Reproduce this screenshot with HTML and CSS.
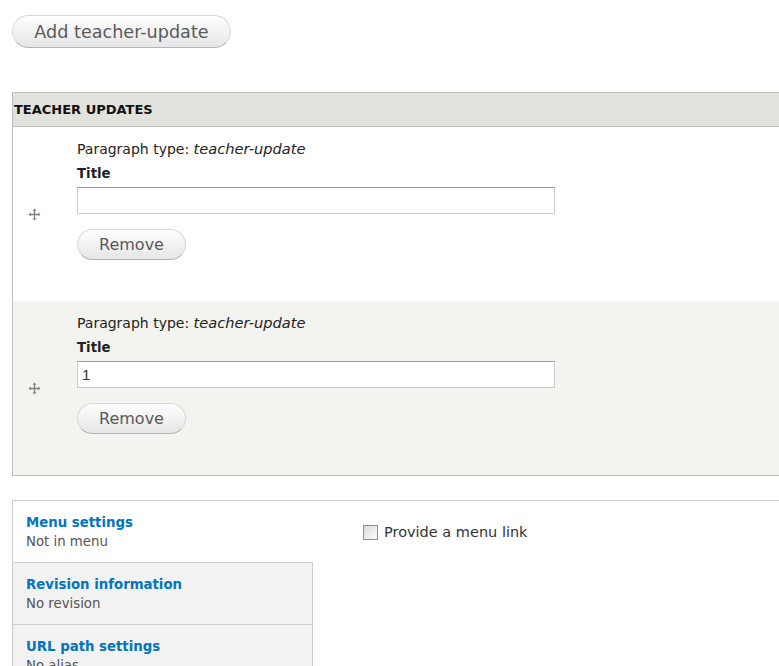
FILE: index.html
```html
<!DOCTYPE html>
<html lang="en">
<head>
    <meta charset="UTF-8">
    <meta name="viewport" content="width=device-width, initial-scale=1.0">
    <title>Edit page</title>
    <link rel="stylesheet" href="styles.css">
</head>
<body>
    <div class="page">
        <div class="actions">
            <button class="btn btn-add" type="button">Add teacher-update</button>
        </div>

        <table class="field-table">
            <thead>
                <tr>
                    <th colspan="2">TEACHER UPDATES</th>
                </tr>
            </thead>
            <tbody>
                <tr class="odd">
                    <td class="handle-cell">
                        <svg class="handle" width="13" height="13" viewBox="0 0 13 13">
                            <path d="M6.5 0.5 L4.5 2.8 H8.5 Z M6.5 12.5 L4.5 10.2 H8.5 Z M0.5 6.5 L2.8 4.5 V8.5 Z M12.5 6.5 L10.2 4.5 V8.5 Z" fill="#7d7d7d"/>
                            <path d="M6.5 2.5 V10.5 M2.5 6.5 H10.5" stroke="#7d7d7d" stroke-width="1.3"/>
                        </svg>
                    </td>
                    <td class="item-cell">
                        <div class="ptype">Paragraph type: <em>teacher-update</em></div>
                        <label class="field-label">Title</label>
                        <input class="text-input" type="text" value="">
                        <div class="item-actions">
                            <button class="btn btn-remove" type="button">Remove</button>
                        </div>
                    </td>
                </tr>
                <tr class="even">
                    <td class="handle-cell">
                        <svg class="handle" width="13" height="13" viewBox="0 0 13 13">
                            <path d="M6.5 0.5 L4.5 2.8 H8.5 Z M6.5 12.5 L4.5 10.2 H8.5 Z M0.5 6.5 L2.8 4.5 V8.5 Z M12.5 6.5 L10.2 4.5 V8.5 Z" fill="#7d7d7d"/>
                            <path d="M6.5 2.5 V10.5 M2.5 6.5 H10.5" stroke="#7d7d7d" stroke-width="1.3"/>
                        </svg>
                    </td>
                    <td class="item-cell">
                        <div class="ptype">Paragraph type: <em>teacher-update</em></div>
                        <label class="field-label">Title</label>
                        <input class="text-input" type="text" value="1">
                        <div class="item-actions">
                            <button class="btn btn-remove" type="button">Remove</button>
                        </div>
                    </td>
                </tr>
            </tbody>
        </table>

        <div class="vertical-tabs">
            <ul class="tab-list">
                <li class="tab selected">
                    <a href="#">Menu settings</a>
                    <span class="summary">Not in menu</span>
                </li>
                <li class="tab">
                    <a href="#">Revision information</a>
                    <span class="summary">No revision</span>
                </li>
                <li class="tab">
                    <a href="#">URL path settings</a>
                    <span class="summary">No alias</span>
                </li>
            </ul>
            <div class="tab-pane">
                <label class="checkbox-label">
                    <span class="checkbox"></span>
                    Provide a menu link
                </label>
            </div>
        </div>
    </div>
</body>
</html>
```

FILE: styles.css
```css
body {
    margin: 0;
    padding: 0;
    font-family: "DejaVu Sans", Verdana, sans-serif;
    font-size: 13px;
    color: #222;
    background-color: #fff;
    overflow: hidden;
}

.page {
    padding: 15px 0 0 12px;
    width: 800px;
}

.btn {
    font-family: "DejaVu Sans", Verdana, sans-serif;
    color: #5a5a5a;
    background: linear-gradient(#fefefe, #e6e6e6);
    border: 1px solid #d8d8d8;
    border-bottom-color: #b4b4b4;
    border-radius: 20px;
    cursor: pointer;
    padding: 0;
}

.btn-add {
    font-size: 17.6px;
    height: 33px;
    width: 219px;
}

.btn-remove {
    font-size: 16px;
    height: 31px;
    width: 109px;
}

/* table of paragraph items */
.field-table {
    margin-top: 44px;
    width: 790px;
    border-collapse: collapse;
    border: 1px solid #bebfb9;
}

.field-table th {
    background-color: #e1e2dc;
    border-bottom: 1px solid #bebfb9;
    text-align: left;
    font-weight: bold;
    height: 33px;
    padding: 0 0 0 1px;
    color: #111;
}

.field-table td {
    vertical-align: top;
    padding: 0;
}

.field-table tr.even td {
    background-color: #f3f3ef;
}

.handle-cell {
    width: 64px;
    vertical-align: middle !important;
}

.handle {
    display: block;
    margin-left: 15px;
}

.item-cell {
    padding: 13px 0 41px 0 !important;
}

.ptype {
    font-size: 14px;
    line-height: 18px;
    margin-bottom: 7px;
}

.ptype em {
    font-size: 14.6px;
}

.field-label {
    display: block;
    font-weight: bold;
    font-size: 13.3px;
    line-height: 18px;
    margin-bottom: 4px;
}

.text-input {
    display: block;
    box-sizing: border-box;
    width: 478px;
    height: 27px;
    margin: 0;
    padding: 2px 4px;
    font-family: "Liberation Sans", Arial, sans-serif;
    font-size: 15px;
    color: #333;
    border: 1px solid #ccc;
    border-top-color: #999;
    background: #fff;
}

.item-actions {
    margin-top: 15px;
}

/* vertical tabs */
.vertical-tabs {
    display: flex;
    margin-top: 24px;
    border-top: 1px solid #ccc;
    border-left: 1px solid #ccc;
}

.tab-list {
    list-style: none;
    margin: 0;
    padding: 0;
    width: 300px;
    box-sizing: border-box;
    flex-shrink: 0;
    background-color: #f2f2f2;
    border-right: 1px solid #ccc;
}

.tab {
    height: 62px;
    box-sizing: border-box;
    padding: 13px 0 0 13px;
    border-top: 1px solid #ccc;
}

.tab:first-child {
    border-top: none;
    height: 61px;
}

.tab.selected {
    background-color: #fff;
    margin-right: -1px;
}

.tab a {
    display: block;
    font-weight: bold;
    font-size: 13.3px;
    color: #0074bd;
    text-decoration: none;
    line-height: 17px;
}

.tab .summary {
    display: block;
    color: #555;
    font-size: 13.3px;
    line-height: 22px;
}

.tab-pane {
    flex: 1;
    padding: 23px 0 0 50px;
}

.checkbox-label {
    display: flex;
    align-items: center;
    gap: 6px;
    font-size: 14.5px;
    color: #333;
}

.checkbox {
    display: inline-block;
    width: 13px;
    height: 13px;
    border: 1px solid #8f8f8f;
    background: linear-gradient(135deg, #dcdcdc, #fbfbfb);
}
```
